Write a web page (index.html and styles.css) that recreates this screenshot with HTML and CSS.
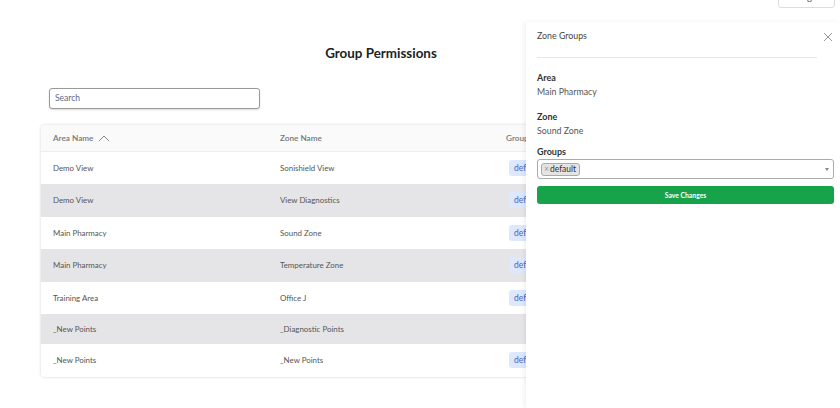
FILE: index.html
```html
<!DOCTYPE html>
<html>
<head>
<meta charset="utf-8">
<link rel="stylesheet" href="styles.css">
</head>
<body>
<div class="topbar"><button class="nav-btn">Navigate</button></div>
<main class="page">
  <h1 class="title">Group Permissions</h1>
  <div class="search-row"><input class="search" type="text" placeholder="Search"></div>
  <div class="table">
    <div class="row head">
      <div class="c1">Area Name <svg class="sort" width="12" height="8" viewBox="0 0 12 8"><path d="M1 7L6 2L11 7" fill="none" stroke="#888" stroke-width="1"/></svg></div>
      <div class="c2">Zone Name</div>
      <div class="c3">Groups</div>
    </div>
    <div class="row"><div class="c1">Demo View</div><div class="c2">Sonishield View</div><div class="c3"><span class="badge">default</span></div></div>
    <div class="row alt"><div class="c1">Demo View</div><div class="c2">View Diagnostics</div><div class="c3"><span class="badge">default</span></div></div>
    <div class="row"><div class="c1">Main Pharmacy</div><div class="c2">Sound Zone</div><div class="c3"><span class="badge">default</span></div></div>
    <div class="row alt"><div class="c1">Main Pharmacy</div><div class="c2">Temperature Zone</div><div class="c3"><span class="badge">default</span></div></div>
    <div class="row"><div class="c1">Training Area</div><div class="c2">Office J</div><div class="c3"><span class="badge">default</span></div></div>
    <div class="row alt short"><div class="c1">_New Points</div><div class="c2">_Diagnostic Points</div><div class="c3"></div></div>
    <div class="row"><div class="c1">_New Points</div><div class="c2">_New Points</div><div class="c3"><span class="badge">default</span></div></div>
  </div>
</main>
<aside class="drawer">
  <div class="drawer-head">
    <span class="drawer-title">Zone Groups</span>
    <svg class="close" width="10" height="10" viewBox="0 0 10 10"><path d="M1 1L9 9M9 1L1 9" stroke="#999" stroke-width="1" fill="none"/></svg>
  </div>
  <div class="divider"></div>
  <div class="field">
    <div class="label">Area</div>
    <div class="value">Main Pharmacy</div>
  </div>
  <div class="field">
    <div class="label">Zone</div>
    <div class="value">Sound Zone</div>
  </div>
  <div class="field groups">
    <div class="label">Groups</div>
    <div class="select">
      <span class="tag"><span class="tag-x">×</span>default</span>
      <span class="caret"></span>
    </div>
  </div>
  <button class="save">Save Changes</button>
</aside>
</body>
</html>
```

FILE: styles.css
```css
* { box-sizing: border-box; }
html, body { margin: 0; padding: 0; }
body {
  width: 840px;
  height: 408px;
  overflow: hidden;
  background: #fff;
  font-family: Lato, "Open Sans", "Liberation Sans", sans-serif;
  color: #444;
  position: relative;
}
.topbar {
  display: flex;
  justify-content: flex-end;
  padding-right: 5px;
  height: 0;
}
.nav-btn {
  margin-top: -15px;
  width: 57px;
  height: 23px;
  background: #fff;
  border: 1px solid #ddd;
  border-radius: 3px;
  font-family: inherit;
  font-size: 9.5px;
  color: #555;
  position: relative;
  z-index: 3;
}
.page {
  width: 680px;
  margin-left: 41px;
  padding-top: 43px;
  display: flex;
  flex-direction: column;
}
.title {
  margin: 0;
  text-align: center;
  font-size: 13.4px;
  font-weight: 700;
  color: #222;
  line-height: 20px;
}
.search-row {
  padding: 22px 0 0 8px;
}
.search {
  width: 211px;
  height: 21px;
  border: 1px solid #999;
  border-radius: 3px;
  padding: 0 5px;
  font-family: inherit;
  font-size: 8.5px;
  box-shadow: 0 1px 2px rgba(0,0,0,0.15);
}
.search::placeholder { color: #5a6a8a; }
.table {
  margin-top: 16px;
  border-radius: 4px;
  box-shadow: 0 0 3px rgba(0,0,0,0.18);
  overflow: hidden;
  background: #fff;
}
.row {
  display: grid;
  grid-template-columns: 227px 226px 1fr;
  height: 32.5px;
  align-items: center;
  font-size: 7.9px;
  color: #555;
  padding-left: 12px;
}
.row.short { height: 30px; }
.row.alt { background: #e5e5e7; }
.row.head {
  height: 27px;
  background: #fafafa;
  color: #777;
  font-weight: 600;
  font-size: 8.2px;
  border-bottom: 1px solid #eee;
}
.sort { margin-left: 3px; vertical-align: -1px; }
.c3 { padding-left: 3px; }
.head .c3 { padding-left: 0; }
.badge {
  display: inline-block;
  background: #dbe8fd;
  color: #4a62c0;
  font-size: 8.5px;
  padding: 3px 5px;
  border-radius: 3px;
}
.drawer {
  position: absolute;
  top: 22px;
  left: 526px;
  width: 314px;
  height: 386px;
  background: #fff;
  box-shadow: -2px 0 4px rgba(0,0,0,0.06);
  padding: 7px 6px 0 11px;
  display: flex;
  flex-direction: column;
  z-index: 2;
}
.drawer-head {
  display: flex;
  justify-content: space-between;
  align-items: center;
  height: 13px;
  padding-right: 1px;
}
.drawer-title { font-size: 8.8px; color: #444; }
.close { margin-top: 2px; }
.divider {
  margin-top: 15px;
  width: 280px;
  border-top: 1px solid #e6e6e6;
}
.field { margin-top: 13px; }
.field + .field { margin-top: 11px; }
.label { font-size: 9px; font-weight: 700; color: #333; line-height: 14px; }
.value { font-size: 8.8px; color: #555; line-height: 14px; }
.field.groups { margin-top: 7px; }
.select {
  margin-top: 0;
  width: 297px;
  height: 20px;
  border: 1px solid #aaa;
  border-radius: 3px;
  display: flex;
  align-items: center;
  padding-left: 3px;
  position: relative;
}
.tag {
  display: inline-flex;
  align-items: center;
  height: 13px;
  background: #e4e4e4;
  border: 1px solid #aaa;
  border-radius: 3px;
  padding: 0 3px 0 2px;
  font-size: 8.5px;
  color: #333;
}
.tag-x { color: #999; margin-right: 1px; font-size: 8.5px; }
.caret {
  position: absolute;
  right: 4px;
  top: 8px;
  width: 0;
  height: 0;
  border-left: 2.5px solid transparent;
  border-right: 2.5px solid transparent;
  border-top: 3px solid #888;
}
.save {
  margin-top: 7px;
  width: 297px;
  height: 18px;
  background: #17a34a;
  border: none;
  border-radius: 3px;
  color: #fff;
  font-family: inherit;
  font-size: 6.8px;
  font-weight: 700;
}
```
